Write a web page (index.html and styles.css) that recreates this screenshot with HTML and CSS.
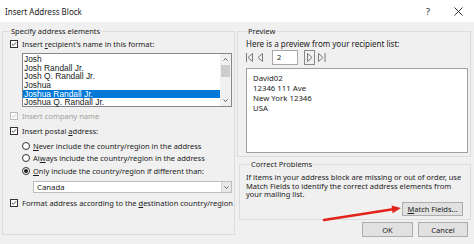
FILE: index.html
```html
<!DOCTYPE html>
<html lang="en">
<head>
    <meta charset="UTF-8">
    <title>Insert Address Block</title>
    <link rel="stylesheet" href="styles.css">
</head>
<body>
    <div class="dialog">
        <header class="titlebar">
            <span class="title">Insert Address Block</span>
            <span class="tb-btn">?</span>
            <span class="tb-btn">
                <svg width="9" height="9" viewBox="0 0 9 9"><path d="M0.5 0.5 L8.5 8.5 M8.5 0.5 L0.5 8.5" stroke="#333" stroke-width="1" fill="none"/></svg>
            </span>
        </header>

        <div class="content">
            <fieldset class="group left">
                <legend>Specify address elements</legend>
                <label class="row">
                    <span class="box"><svg viewBox="0 0 8 8"><path d="M1.2 4 L3 5.8 L6.8 1.8" /></svg></span>
                    <span>Insert <u>r</u>ecipient's name in this format:</span>
                </label>
                <div class="listbox">
                    <ul>
                        <li>Josh</li>
                        <li>Josh Randall Jr.</li>
                        <li>Josh Q. Randall Jr.</li>
                        <li>Joshua</li>
                        <li class="sel">Joshua Randall Jr.</li>
                        <li>Joshua Q. Randall Jr.</li>
                    </ul>
                    <div class="scroll">
                        <span class="arr"><svg width="5" height="3" viewBox="0 0 5 3"><path d="M0.5 2.5 L2.5 0.5 L4.5 2.5"/></svg></span>
                        <span class="thumb"></span>
                        <span class="fill"></span>
                        <span class="arr"><svg width="5" height="3" viewBox="0 0 5 3"><path d="M0.5 0.5 L2.5 2.5 L4.5 0.5"/></svg></span>
                    </div>
                </div>
                <label class="row disabled gap3">
                    <span class="box"><svg viewBox="0 0 8 8"><path d="M1.2 4 L3 5.8 L6.8 1.8" /></svg></span>
                    <span>Insert company name</span>
                </label>
                <label class="row gap3">
                    <span class="box"><svg viewBox="0 0 8 8"><path d="M1.2 4 L3 5.8 L6.8 1.8" /></svg></span>
                    <span>Insert postal <u>a</u>ddress:</span>
                </label>
                <label class="row radio-row gap3">
                    <span class="radio"></span>
                    <span><u>N</u>ever include the country/region in the address</span>
                </label>
                <label class="row radio-row">
                    <span class="radio"></span>
                    <span>Al<u>w</u>ays include the country/region in the address</span>
                </label>
                <label class="row radio-row gap1">
                    <span class="radio on"></span>
                    <span><u>O</u>nly include the country/region if different than:</span>
                </label>
                <div class="combo">
                    <span class="combo-text">Canada</span>
                    <span class="drop"><svg width="5" height="3" viewBox="0 0 5 3"><path d="M0.5 0.5 L2.5 2.5 L4.5 0.5"/></svg></span>
                </div>
                <label class="row gap4">
                    <span class="box"><svg viewBox="0 0 8 8"><path d="M1.2 4 L3 5.8 L6.8 1.8" /></svg></span>
                    <span>Format address according to the <u>d</u>estination country/region</span>
                </label>
            </fieldset>

            <div class="right">
                <fieldset class="group preview">
                    <legend>Preview</legend>
                    <div class="hint">Here is a preview from your recipient list:</div>
                    <div class="nav">
                        <svg class="first" width="7" height="9" viewBox="0 0 7 9"><path d="M0.5 0 V9 M6.5 0.5 L2 4.5 L6.5 8.5 Z"/></svg>
                        <svg class="prev" width="6" height="9" viewBox="0 0 6 9"><path d="M5.5 0.5 L1 4.5 L5.5 8.5 Z"/></svg>
                        <span class="record">2</span>
                        <span class="next"><svg width="6" height="9" viewBox="0 0 6 9"><path d="M0.5 0.5 L5 4.5 L0.5 8.5 Z"/></svg></span>
                        <svg class="last" width="8" height="9" viewBox="0 0 8 9"><path d="M0.5 0.5 L5 4.5 L0.5 8.5 Z M7 0 V9"/></svg>
                    </div>
                    <div class="preview-box">
                        <span>David02</span>
                        <span>12346 111 Ave</span>
                        <span>New York 12346</span>
                        <span>USA</span>
                    </div>
                </fieldset>

                <fieldset class="group problems">
                    <legend>Correct Problems</legend>
                    <p>
                        <span>If items in your address block are missing or out of order, use</span>
                        <span>Match Fields to identify the correct address elements from</span>
                        <span>your mailing list.</span>
                    </p>
                    <button class="btn match"><u>M</u>atch Fields...</button>
                </fieldset>

                <div class="buttons">
                    <button class="btn ok">OK</button>
                    <button class="btn cancel">Cancel</button>
                </div>
            </div>
        </div>

        <svg class="arrow" width="474" height="244" viewBox="0 0 474 244">
            <line x1="324" y1="220" x2="393" y2="209.3" stroke="#e2231a" stroke-width="2.6" stroke-linecap="round"/>
            <polygon points="401,208 392.6,213.2 391.6,205.6" fill="#e2231a"/>
        </svg>
    </div>
</body>
</html>
```

FILE: styles.css
```css
* {
    box-sizing: border-box;
}
body {
    margin: 0;
    font-family: "Segoe UI", "Noto Sans", sans-serif;
    font-size: 7.5px;
    color: #1b1b1b;
    background: #fff;
}
.dialog {
    position: relative;
    width: 474px;
    height: 244px;
    background: #f0f0f0;
    overflow: hidden;
}
.titlebar {
    display: flex;
    align-items: center;
    height: 22px;
    background: #fff;
    padding-left: 5px;
    padding-right: 1px;
}
.title {
    flex: 1;
    font-size: 8px;
}
.tb-btn {
    width: 30px;
    display: flex;
    justify-content: center;
    font-size: 9px;
}
.content {
    display: grid;
    grid-template-columns: 233px 234px;
    column-gap: 2px;
    padding: 3px 3px 0 2px;
    align-items: start;
}
.group {
    margin: 0;
    padding: 0;
    border: 1px solid #dcdcdc;
    min-width: 0;
}
.group legend {
    padding: 0 1px;
    line-height: 12px;
}
u {
    text-decoration-thickness: 1px;
    text-underline-offset: 1px;
}

/* left group */
.left {
    padding: 0 0 25px 7px;
}
.row {
    display: flex;
    align-items: center;
    height: 12px;
    margin-top: 1px;
    white-space: nowrap;
}
.gap1 { margin-top: 1px; }
.gap3 { margin-top: 3px; }
.gap4 { margin-top: 4px; }
.radio-row + .radio-row { margin-top: 0; }
.radio-row + .radio-row.gap1 { margin-top: 1px; }
.box {
    width: 8px;
    height: 8px;
    border: 1px solid #333;
    background: #fff;
    margin-right: 4px;
    flex: none;
    display: flex;
}
.box svg {
    width: 6px;
    height: 6px;
    fill: none;
    stroke: #222;
    stroke-width: 1.1;
}
.disabled {
    color: #a0a0a0;
}
.disabled .box {
    border-color: #bcbcbc;
}
.disabled .box svg {
    stroke: #b0b0b0;
}
.radio-row {
    margin-left: 12px;
}
.radio {
    width: 8px;
    height: 8px;
    border: 1px solid #333;
    border-radius: 50%;
    background: #fff;
    margin-right: 3px;
    flex: none;
    display: flex;
    align-items: center;
    justify-content: center;
}
.radio.on::after {
    content: "";
    width: 4px;
    height: 4px;
    border-radius: 50%;
    background: #1b1b1b;
}
.listbox {
    display: flex;
    width: 210px;
    height: 54px;
    margin: 3px 0 0 12px;
    border: 1px solid #828790;
    background: #fff;
}
.listbox ul {
    flex: 1;
    margin: 0;
    padding: 1px 0 0;
    list-style: none;
}
.listbox li {
    height: 8.67px;
    line-height: 8.67px;
    padding-left: 1px;
    font-family: "Liberation Sans", Arial, sans-serif;
    font-size: 8.4px;
    white-space: nowrap;
}
.listbox li.sel {
    background: #0078d7;
    color: #fff;
}
.scroll {
    width: 11px;
    display: flex;
    flex-direction: column;
    background: #f0f0f0;
}
.scroll .arr {
    height: 11px;
    display: flex;
    align-items: center;
    justify-content: center;
}
.scroll svg, .drop svg {
    fill: none;
    stroke: #606060;
    stroke-width: 1;
}
.scroll .thumb {
    height: 12px;
    margin: 0 1px;
    background: #cdcdcd;
}
.scroll .fill {
    flex: 1;
}
.combo {
    display: flex;
    width: 199px;
    height: 12px;
    margin: 4px 0 0 23px;
    border: 1px solid #bdbdbd;
    background: #fff;
}
.combo-text {
    flex: 1;
    padding-left: 3px;
    line-height: 10px;
    font-size: 7.8px;
}
.drop {
    width: 10px;
    background: #e8e8e8;
    border-left: 1px solid #d6d6d6;
    display: flex;
    align-items: center;
    justify-content: center;
}

/* right column */
.right {
    display: flex;
    flex-direction: column;
}
.preview {
    padding: 0 0 3px 8px;
}
.preview legend {
    margin-left: 1px;
}
.hint {
    height: 12px;
    line-height: 12px;
    margin-top: 1px;
    font-size: 8px;
}
.nav {
    display: flex;
    align-items: center;
    height: 15px;
}
.nav svg {
    fill: none;
    stroke: #7a7a7a;
    stroke-width: 1;
}
.prev {
    margin-left: 4px;
}
.record {
    width: 26px;
    height: 15px;
    margin-left: 9px;
    padding-left: 4px;
    line-height: 13px;
    border: 1px solid #a8a8a8;
    background: #fff;
}
.next {
    width: 11px;
    height: 15px;
    margin-left: 6px;
    border: 1px solid #8a8a8a;
    display: flex;
    align-items: center;
    justify-content: center;
}
.last {
    margin-left: 3px;
}
.preview-box {
    width: 222px;
    height: 85px;
    margin-top: 3px;
    padding: 4px 0 0 6px;
    border: 1px solid #a0a0a0;
    background: #fff;
}
.preview-box span {
    display: block;
    height: 10px;
    line-height: 10px;
    font-size: 7.8px;
}
.problems {
    display: flex;
    flex-direction: column;
    margin: 1px 0 0 2px;
    padding: 0 7px 3px 6px;
}
.problems legend {
    margin-left: 4px;
}
.problems p {
    margin: 3px 0 0;
    white-space: nowrap;
}
.problems p span {
    display: block;
    height: 8.7px;
    line-height: 8.7px;
}
.btn {
    height: 15px;
    padding: 0;
    font: inherit;
    color: #1b1b1b;
    background: #e1e1e1;
    border: 1px solid #adadad;
}
.match {
    align-self: flex-end;
    width: 61px;
    height: 14px;
    margin-top: 3px;
}
.buttons {
    display: flex;
    justify-content: flex-end;
    gap: 5px;
    margin-top: 2px;
    padding-right: 3px;
}
.ok {
    width: 51px;
}
.cancel {
    width: 50px;
}
.arrow {
    position: absolute;
    left: 0;
    top: 0;
    pointer-events: none;
}
```
